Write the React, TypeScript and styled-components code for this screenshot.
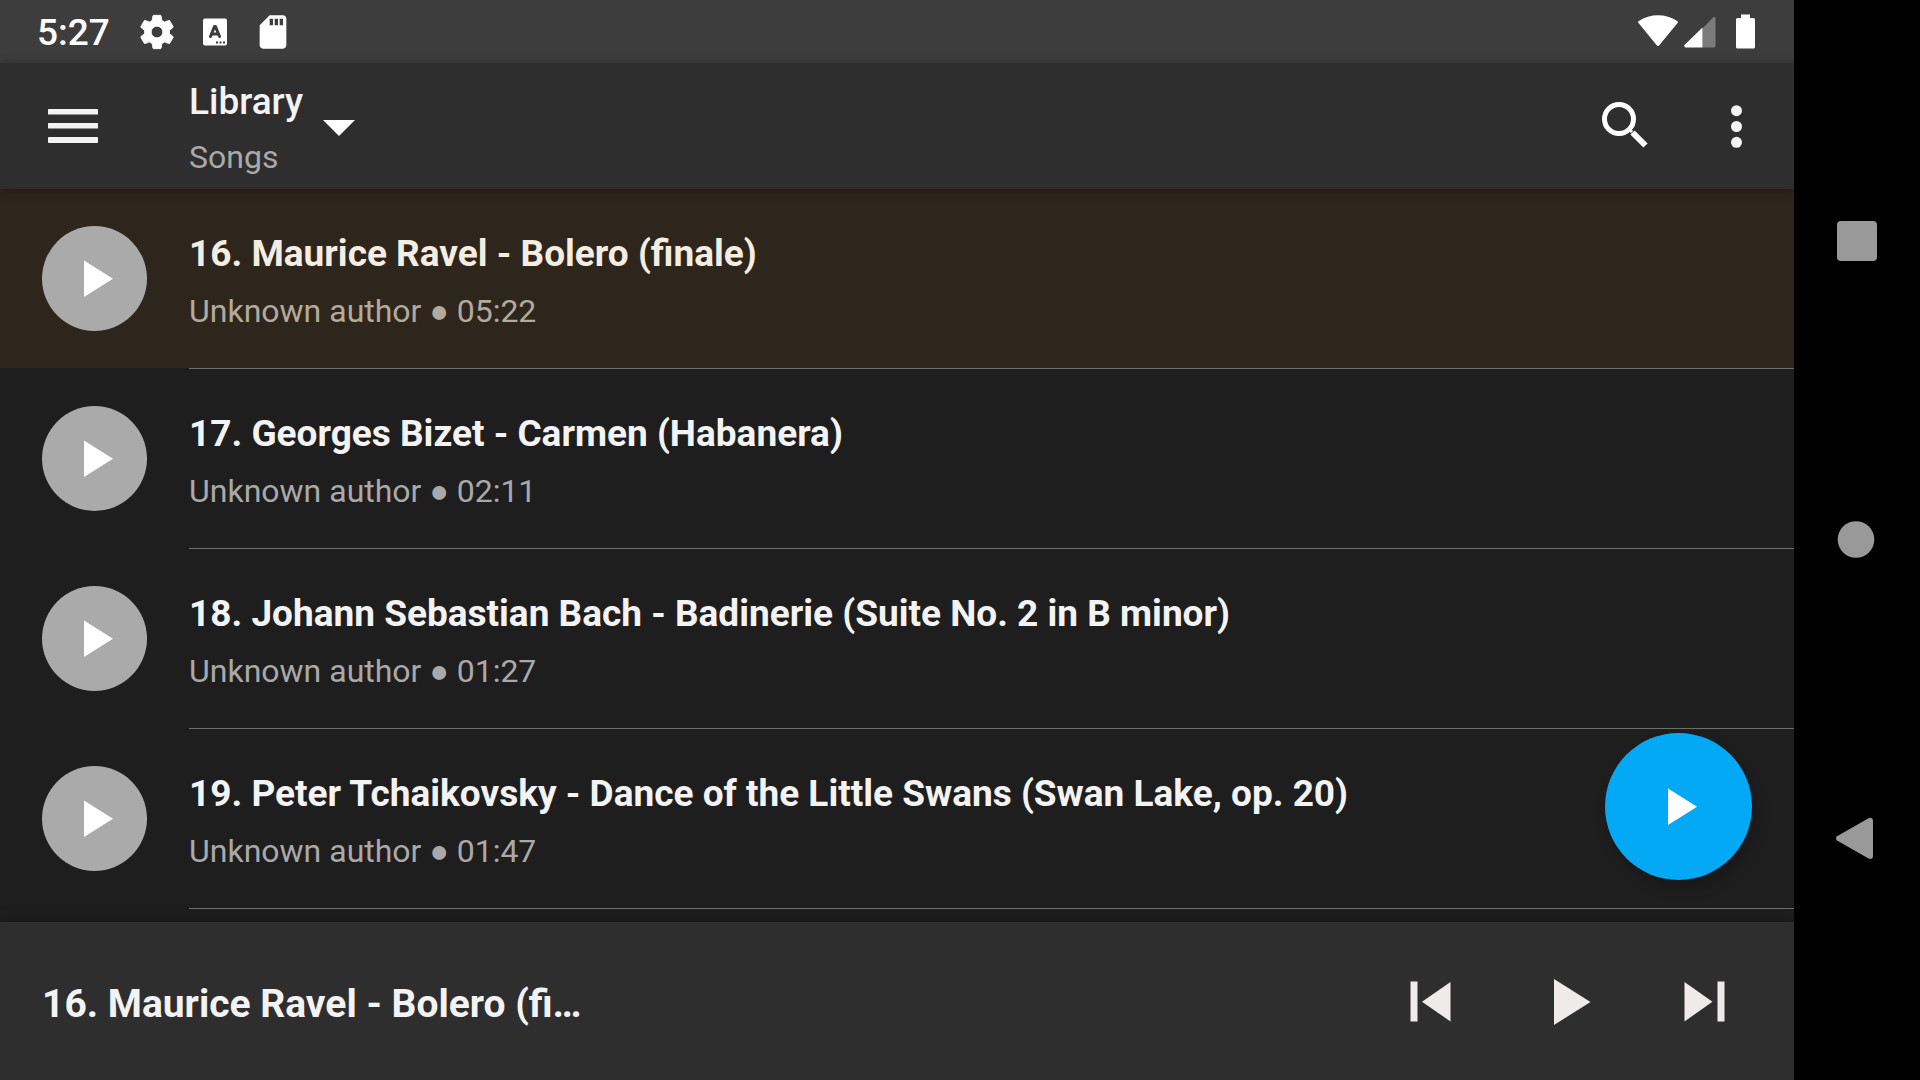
import React from "react";
import styled, { createGlobalStyle } from "styled-components";

const GlobalStyle = createGlobalStyle`
  *, *::before, *::after { box-sizing: border-box; }
  html, body { margin: 0; background: #000; }
  body { font-family: Roboto, "Noto Sans", sans-serif; overflow: hidden; }
  button { margin: 0; padding: 0; border: 0; background: none; color: inherit; font: inherit; cursor: pointer; }
  svg { display: block; flex: none; }
`;

const Device = styled.div`
  display: flex;
  height: 100vh;
`;

const Screen = styled.div`
  flex: 1;
  min-width: 0;
  display: flex;
  flex-direction: column;
  background: #1e1e1e;
`;

const StatusBar = styled.div`
  flex: none;
  height: 63px;
  padding: 0 39px 0 37px;
  display: flex;
  align-items: center;
  justify-content: space-between;
  background: #3d3d3d;
  color: #fff;
`;

const StatusGroup = styled.div<{ $gap: number }>`
  display: flex;
  align-items: center;
  gap: ${(p) => p.$gap}px;
`;

const Clock = styled.time`
  width: 82px;
  padding-top: 2px;
  font-size: 37px;
  font-weight: 500;
  line-height: 44px;
  white-space: nowrap;
`;

const AppBar = styled.header`
  flex: none;
  height: 126px;
  padding: 0 25px 0 42px;
  display: flex;
  align-items: center;
  background: #2e2e2e;
  position: relative;
  z-index: 1;
  box-shadow: 0 2px 10px rgba(20, 0, 10, 0.4);
`;

const IconButton = styled.button`
  width: 64px;
  height: 64px;
  display: grid;
  place-items: center;
`;

const Picker = styled.button`
  margin-left: 83px;
  padding-top: 4px;
  display: flex;
  align-items: center;
  gap: 20px;
  text-align: left;
`;

const PickerText = styled.span`
  display: flex;
  flex-direction: column;
  gap: 14px;
`;

const PickerTitle = styled.span`
  font-size: 37px;
  font-weight: 500;
  line-height: 44px;
  color: #f3f3f3;
`;

const PickerSubtitle = styled.span`
  font-size: 32px;
  line-height: 38px;
  color: #a9a9a9;
`;

const Actions = styled.div`
  margin-left: auto;
  display: flex;
  gap: 48px;
`;

const Content = styled.main`
  flex: 1;
  min-height: 0;
  display: flex;
  flex-direction: column;
  position: relative;
`;

const SongList = styled.ul`
  flex: 1;
  min-height: 0;
  margin: 0;
  padding: 0;
  list-style: none;
  overflow: hidden;
`;

const SongItem = styled.li`
  &::after {
    content: "";
    display: block;
    height: 1px;
    margin-left: 189px;
    background: #6e706e;
  }
`;

const Song = styled.div<{ $active: boolean }>`
  height: 179px;
  padding: 37px 42px;
  display: flex;
  gap: 42px;
  background: ${(p) => (p.$active ? "#2e261c" : "transparent")};
  color: ${(p) => (p.$active ? "#f5ede1" : "#f3f3f3")};
`;

const RoundPlay = styled.button`
  flex: none;
  width: 105px;
  height: 105px;
  border-radius: 50%;
  background: #aaa;
`;

const SongText = styled.div`
  min-width: 0;
  padding-top: 6px;
  display: flex;
  flex-direction: column;
  gap: 16px;
  white-space: nowrap;
`;

const SongTitle = styled.span`
  font-size: 37px;
  font-weight: 700;
  line-height: 44px;
`;

const SongMeta = styled.span<{ $active: boolean }>`
  font-size: 32px;
  line-height: 38px;
  color: ${(p) => (p.$active ? "#b3aa9e" : "#a9a9a9")};
`;

const Fab = styled.button`
  position: absolute;
  right: 42px;
  bottom: 42px;
  width: 147px;
  height: 147px;
  border-radius: 50%;
  background: #04a9f6;
  box-shadow: 4px 8px 14px rgba(0, 0, 0, 0.22);
`;

const PlayerBar = styled.footer`
  flex: none;
  height: 158px;
  padding: 0 21px 0 42px;
  display: flex;
  align-items: center;
  justify-content: space-between;
  background: #2e2e2e;
  position: relative;
  box-shadow: 0 0 14px rgba(0, 0, 0, 0.35);
`;

const NowPlaying = styled.span`
  padding-top: 6px;
  font-size: 39px;
  font-weight: 700;
  line-height: 46px;
  color: #f3f3f3;
  white-space: nowrap;
`;

const Transport = styled.div`
  display: flex;
  color: #efebea;
`;

const TransportButton = styled.button`
  width: 137px;
  height: 158px;
  display: grid;
  place-items: center;
`;

const SystemNav = styled.nav`
  flex: none;
  width: 126px;
  display: flex;
  flex-direction: column;
  align-items: center;
  justify-content: center;
  color: #999;
`;

const SystemButton = styled.button`
  width: 126px;
  height: 299px;
  display: grid;
  place-items: center;
`;

const songs = [
  { title: "16. Maurice Ravel - Bolero (finale)", author: "Unknown author", length: "05:22" },
  { title: "17. Georges Bizet - Carmen (Habanera)", author: "Unknown author", length: "02:11" },
  { title: "18. Johann Sebastian Bach - Badinerie (Suite No. 2 in B minor)", author: "Unknown author", length: "01:27" },
  { title: "19. Peter Tchaikovsky - Dance of the Little Swans (Swan Lake, op. 20)", author: "Unknown author", length: "01:47" },
];

const GearIcon = () => (
  <svg width="40" height="40" viewBox="0 0 24 24" fill="currentColor">
    <path d="M19.43 12.98c.04-.32.07-.64.07-.98s-.03-.66-.07-.98l2.11-1.65c.19-.15.24-.42.12-.64l-2-3.46c-.12-.22-.39-.3-.61-.22l-2.49 1c-.52-.4-1.08-.73-1.69-.98l-.38-2.65C14.46 2.18 14.25 2 14 2h-4c-.25 0-.46.18-.49.42l-.38 2.65c-.61.25-1.17.59-1.69.98l-2.49-1c-.23-.09-.49 0-.61.22l-2 3.46c-.13.22-.07.49.12.64l2.11 1.65c-.04.32-.07.65-.07.98s.03.66.07.98l-2.11 1.65c-.19.15-.24.42-.12.64l2 3.46c.12.22.39.3.61.22l2.49-1c.52.4 1.08.73 1.69.98l.38 2.65c.03.24.24.42.49.42h4c.25 0 .46-.18.49-.42l.38-2.65c.61-.25 1.17-.59 1.69-.98l2.49 1c.23.09.49 0 .61-.22l2-3.46c.12-.22.07-.49-.12-.64l-2.11-1.65zM12 15.5c-1.93 0-3.5-1.57-3.5-3.5s1.57-3.5 3.5-3.5 3.5 1.57 3.5 3.5-1.57 3.500-3.500 3.500z" stroke="currentColor" strokeWidth=".5" />
  </svg>
);

const KeyboardIcon = () => (
  <svg width="40" height="40" viewBox="0 0 40 40">
    <rect x="8" y="6.500" width="24" height="27" rx="2" fill="currentColor" />
    <path d="M15.500 24.500L19.500 14.500H20.500L24.500 24.500M17 22H23" fill="none" stroke="#3d3d3d" strokeWidth="3" strokeLinecap="round" strokeLinejoin="round" />
    <path d="M21 29.500h2v2h-2zM24.500 29.500h2v2h-2zM28 29.500h2v2h-2z" fill="#3d3d3d" />
  </svg>
);

const SdCardIcon = () => (
  <svg width="40" height="40" viewBox="0 0 24 24" fill="currentColor">
    <path d="M18 2h-8L4.020 8 4 20c0 1.100.9 2 2 2h12c1.100 0 2-.9 2-2V4c0-1.100-.9-2-2-2zm-6 6h-2V4h2v4zm3 0h-2V4h2v4zm3 0h-2V4h2v4z" />
  </svg>
);

const WifiIcon = () => (
  <svg width="42" height="36" viewBox="0 0 42 36" fill="currentColor">
    <path d="M1.500 9Q.5 7.800 1.800 7C13-.8 29-.8 40.200 7Q41.500 7.800 40.500 9L22.500 31Q21 32.800 19.500 31Z" />
  </svg>
);

const SignalIcon = () => (
  <svg width="32" height="36" viewBox="0 0 32 36" fill="currentColor">
    <path d="M18.500 14.500L29 3.500Q31.500 2 31.500 4.500V32Q31.500 33.500 30 33.500H18.500Z" opacity=".32" />
    <path d="M18.500 13.500V33.500H1.500Q-.5 32.500 .5 31Z" />
  </svg>
);

const BatteryIcon = () => (
  <svg width="20" height="36" viewBox="0 0 20 36" fill="currentColor">
    <path d="M6 .5h9v3.500h3.500q1.500 0 1.500 1.500v27.500q0 1.500-1.500 1.500H2.500Q1 34.500 1 33v-27.500Q1 4 2.500 4h3.500z" />
  </svg>
);

const MenuIcon = () => (
  <svg width="64" height="64" viewBox="0 0 64 64" fill="#f3f3f3">
    <rect x="6" y="15" width="50" height="5.500" rx=".5" />
    <rect x="6" y="29" width="50" height="5.500" rx=".5" />
    <rect x="6" y="43" width="50" height="6" rx="1" />
  </svg>
);

const CaretIcon = () => (
  <svg width="32" height="16" viewBox="0 0 32 16" fill="#fff">
    <path d="M0 0H32L16 16Z" />
  </svg>
);

const SearchIcon = () => (
  <svg width="64" height="64" viewBox="0 0 64 64" fill="none" stroke="#fff">
    <circle cx="26" cy="25" r="14.500" strokeWidth="5" />
    <path d="M37 36L39 38" strokeWidth="3" />
    <path d="M39.500 38.500L52.500 51.500" strokeWidth="6" />
  </svg>
);

const MoreIcon = () => (
  <svg width="64" height="64" viewBox="0 0 64 64" fill="#f3f3f3">
    <circle cx="31.500" cy="16.700" r="5.500" />
    <circle cx="31.500" cy="32.500" r="5.500" />
    <circle cx="31.500" cy="48.300" r="5.500" />
  </svg>
);

const SmallPlayIcon = ({ size }: { size: number }) => (
  <svg width={size} height={size} viewBox={`${-size / 2} ${-size / 2} ${size} ${size}`} fill="#fff">
    <path d="M-10.500 -18V18.500L18.500 .2Z" />
  </svg>
);

const FabPlayIcon = () => (
  <svg width="147" height="147" viewBox="0 0 147 147" fill="#fff">
    <path d="M63 55.500V92L92 73.700Z" />
  </svg>
);

const PreviousIcon = () => (
  <svg width="65" height="64" viewBox="0 0 65 64" fill="currentColor">
    <path d="M12.500 12.500h7v40h-7zM52.500 13V52.500L24 32.700Z" />
  </svg>
);

const PlayIcon = () => (
  <svg width="65" height="64" viewBox="0 0 65 64" fill="currentColor">
    <path d="M19 10V56L55.500 33Z" />
  </svg>
);

const NextIcon = () => (
  <svg width="65" height="64" viewBox="0 0 65 64" fill="currentColor">
    <path d="M45.500 12.500h7v40h-7zM12.500 13V52.500L40.500 32.700Z" />
  </svg>
);

const OverviewIcon = () => (
  <svg width="64" height="64" viewBox="0 0 64 64" fill="currentColor">
    <rect x="12" y="12" width="40" height="40" rx="4" />
  </svg>
);

const HomeIcon = () => (
  <svg width="64" height="64" viewBox="0 0 64 64" fill="currentColor">
    <circle cx="31" cy="31.500" r="18.300" />
  </svg>
);

const BackIcon = () => (
  <svg width="64" height="64" viewBox="0 0 64 64" fill="currentColor">
    <path d="M12 29.300L43.500 11.300Q47.800 9.500 48 13.500V49Q47.800 53 43.500 51.500L12 33.500Q10 31.500 12 29.300Z" />
  </svg>
);

export default function App() {
  return (
    <>
      <GlobalStyle />
      <Device>
        <Screen>
          <StatusBar>
            <StatusGroup $gap={18}>
              <Clock>5:27</Clock>
              <GearIcon />
              <KeyboardIcon />
              <SdCardIcon />
            </StatusGroup>
            <StatusGroup $gap={5}>
              <WifiIcon />
              <StatusGroup $gap={19}>
                <SignalIcon />
                <BatteryIcon />
              </StatusGroup>
            </StatusGroup>
          </StatusBar>
          <AppBar>
            <IconButton aria-label="Menu">
              <MenuIcon />
            </IconButton>
            <Picker aria-haspopup="listbox">
              <PickerText>
                <PickerTitle>Library</PickerTitle>
                <PickerSubtitle>Songs</PickerSubtitle>
              </PickerText>
              <CaretIcon />
            </Picker>
            <Actions>
              <IconButton aria-label="Search">
                <SearchIcon />
              </IconButton>
              <IconButton aria-label="More options">
                <MoreIcon />
              </IconButton>
            </Actions>
          </AppBar>
          <Content>
            <SongList>
              {songs.map((song, i) => (
                <SongItem key={song.title}>
                  <Song $active={i === 0}>
                    <RoundPlay aria-label={`Play ${song.title}`}>
                      <SmallPlayIcon size={105} />
                    </RoundPlay>
                    <SongText>
                      <SongTitle>{song.title}</SongTitle>
                      <SongMeta $active={i === 0}>{`${song.author} ● ${song.length}`}</SongMeta>
                    </SongText>
                  </Song>
                </SongItem>
              ))}
            </SongList>
            <Fab aria-label="Play all">
              <FabPlayIcon />
            </Fab>
          </Content>
          <PlayerBar>
            <NowPlaying>16. Maurice Ravel - Bolero (fi…</NowPlaying>
            <Transport>
              <TransportButton aria-label="Previous">
                <PreviousIcon />
              </TransportButton>
              <TransportButton aria-label="Play">
                <PlayIcon />
              </TransportButton>
              <TransportButton aria-label="Next">
                <NextIcon />
              </TransportButton>
            </Transport>
          </PlayerBar>
        </Screen>
        <SystemNav aria-label="System navigation">
          <SystemButton aria-label="Overview">
            <OverviewIcon />
          </SystemButton>
          <SystemButton aria-label="Home">
            <HomeIcon />
          </SystemButton>
          <SystemButton aria-label="Back">
            <BackIcon />
          </SystemButton>
        </SystemNav>
      </Device>
    </>
  );
}
